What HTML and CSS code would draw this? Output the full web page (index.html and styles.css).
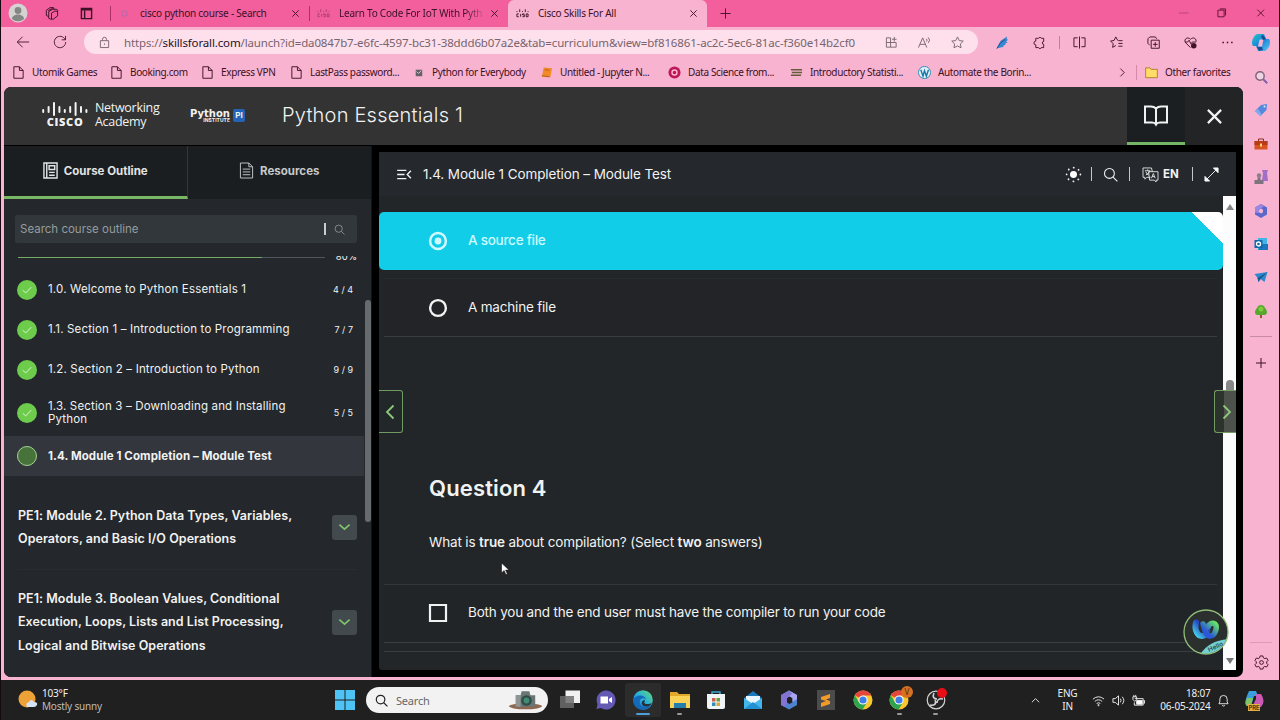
FILE: index.html
```
<!DOCTYPE html>
<html lang="en">
<head>
  <meta charset="utf-8">
  <title>Cisco Skills For All</title>
  <link rel="stylesheet" href="styles.css">
</head>
<body>
<svg class="defs">
  <defs>
    <symbol id="x" viewBox="0 0 10 10"><path d="M1.5 1.5l7 7M8.5 1.5l-7 7"/></symbol>
    <symbol id="page" viewBox="0 0 14 14"><path d="M2 .8h6l4 4v8.4H2zM8 .8v4h4"/></symbol>
    <symbol id="search" viewBox="0 0 14 14"><circle cx="6" cy="6" r="4.6"/><path d="M9.4 9.4l4 4"/></symbol>
    <symbol id="cisco" viewBox="0 0 46 14"><path d="M1.2 8v2M6.6 5v5M12 1v12M17.4 5v5M22.8 8v2M28.2 5v5M33.6 1v12M39 5v5M44.4 8v2"/></symbol>
    <symbol id="check" viewBox="0 0 20 20"><circle cx="10" cy="10" r="10" fill="#6dcc4b" stroke="none"/><path d="M5.8 10.2l2.9 2.8 5.5-5.8" stroke="#d8f5cb"/></symbol>
    <symbol id="down" viewBox="0 0 14 8"><path d="M1.5 1.5L7 6.3l5.500-4.800"/></symbol>
    <symbol id="chrome" viewBox="0 0 20 20"><g stroke="none"><circle cx="10" cy="10" r="9.500" fill="#fbc72e"/><path d="M10 10L1.800 5.200A9.500 9.500 0 0 1 18.300 5.400H10z" fill="#e2473c"/><path d="M1.800 5.200A9.500 9.500 0 0 0 9.600 19.500L14 12.200 6 12.200z" fill="#2da44f"/><circle cx="10" cy="10" r="4.600" fill="#fff"/><circle cx="10" cy="10" r="3.600" fill="#3d7fe6"/></g></symbol>
    <linearGradient id="cop" x1="0" y1="0" x2="1" y2="1"><stop offset="0" stop-color="#2bc6c9"/><stop offset=".5" stop-color="#1685d8"/><stop offset="1" stop-color="#63c8f4"/></linearGradient>
    <linearGradient id="edge" x1="0" y1="1" x2="1" y2="0"><stop offset="0" stop-color="#1769c5"/><stop offset=".5" stop-color="#28aede"/><stop offset="1" stop-color="#62dc6d"/></linearGradient>
    <linearGradient id="webex1" x1="0" y1="1" x2="1" y2="0"><stop offset="0" stop-color="#48d6ea"/><stop offset=".6" stop-color="#2548c4"/></linearGradient>
    <linearGradient id="webex2" x1="0" y1="1" x2="1" y2="0"><stop offset=".3" stop-color="#2a58d6"/><stop offset="1" stop-color="#66e266"/></linearGradient>
  </defs>
</svg>

<div class="browser">
  <div class="window">
    <div class="tabs">
      <svg class="avatar" viewBox="0 0 20 20"><circle cx="10" cy="10" r="9.500" fill="#d5d3d2"/><circle cx="10" cy="7.500" r="3.400" fill="#858785"/><path d="M4 16c0-6 12-6 12 0a9 9 0 0 1-12 0z" fill="#858785"/></svg>
      <svg class="workspaces" viewBox="0 0 16 16"><path d="M7 14l-2-1V6l4-2.500h4.500l1 1v6L10 14zM8 14V7.500l3.500-2h3M5 11.500L2.500 10V4.500l4-2.800h4M4.500 5L8 3h3"/></svg>
      <svg class="tabmenu" viewBox="0 0 14 14"><path d="M1.500 1.500h11v11h-11zM1.500 3h11M5 4v8" stroke-width="1.500"/></svg>
      <div class="tab first"><svg class="fav" viewBox="0 0 12 12"><circle cx="6" cy="6" r="2.500" stroke="#b66bb0"/></svg><span>cisco python course - Search</span><svg class="close"><use href="#x"/></svg></div>
      <div class="tab second"><svg class="fav faded cisco-fav" viewBox="0 0 14 10"><path d="M1 3v1M4 1v3M7 3v1M10 1v3M13 3v1M3 6H1v3h2M5 6v3M9 6H7v1h2v2H7M11 6h2v3h-2z"/></svg><span>Learn To Code For IoT With Pyth</span><svg class="close"><use href="#x"/></svg></div>
      <div class="tab active"><svg class="fav cisco-fav" viewBox="0 0 14 10"><path d="M1 3v1M4 1v3M7 3v1M10 1v3M13 3v1M3 6H1v3h2M5 6v3M9 6H7v1h2v2H7M11 6h2v3h-2z"/></svg><span>Cisco Skills For All</span><svg class="close"><use href="#x"/></svg></div>
      <svg class="newtab" viewBox="0 0 12 12"><path d="M6 .5v11M.5 6h11"/></svg>
      <div class="winbtns">
        <svg viewBox="0 0 10 10"><path d="M0 5h10" stroke="#b74676"/></svg>
        <svg viewBox="0 0 10 10"><path d="M1 2h6.500v7H1zM3 .700h6v7"/></svg>
        <svg viewBox="0 0 10 10"><use href="#x"/></svg>
      </div>
    </div>

    <div class="toolbar">
      <svg class="back" viewBox="0 0 16 16"><path d="M15 8H1.500M7.500 2L1.500 8l6 6"/></svg>
      <svg class="reload" viewBox="0 0 16 16"><path d="M14 5.500A6.500 6.500 0 1 0 14.500 8M14.300 1v4.500H10"/></svg>
      <div class="address">
        <svg class="lock" viewBox="0 0 12 14"><path d="M1.500 5h9v7.500h-9zM3.800 5V3.500a2.200 2.200 0 0 1 4.400 0V5M6 8v1.500"/></svg>
        <span class="url">https://<b>skillsforall.com</b>/launch?id=da0847b7-e6fc-4597-bc31-38ddd6b07a2e&amp;tab=curriculum&amp;view=bf816861-ac2c-5ec6-81ac-f360e14b2cf0</span>
        <div class="addr-icons">
          <svg viewBox="0 0 14 14"><path d="M1.500 2H6v10H1.500zM1.500 7H12v5H6M10 1v5M7.500 3.500h5"/></svg>
          <svg viewBox="0 0 14 14"><path d="M.5 12.500L5 2l4.500 10.500M2 9h6M9 3q1.500 1.500 0 3M11 1.500q3 3 0 6"/></svg>
          <svg viewBox="0 0 14 14"><path d="M7 1l1.900 3.900 4.300.6-3.100 3 .7 4.200L7 10.700l-3.800 2 .7-4.200-3.100-3 4.300-.6z"/></svg>
        </div>
      </div>
      <div class="tools">
        <svg viewBox="0 0 14 14"><path d="M.5 13.500L5 5l7-4.500-.5 3 1.500.3-2 2.500 1.500.5-3 1.700 1 1-3 1 1 1z" fill="#3a86d0" stroke="none"/><path d="M1 13.500q3-7 9-10" stroke="#244e88"/></svg>
        <svg viewBox="0 0 14 14"><path d="M4 2.500h2a1.600 1.600 0 0 1 3 0h2.500V6a1.500 1.500 0 1 0 0 3v3.500H9a1.600 1.600 0 0 1-3 0H3V9.500a2 2 0 0 1 0-4V2.500z"/></svg>
        <i></i>
        <svg viewBox="0 0 14 14"><path d="M5 2H1v9.500h4M9 2h4v9.500H9M7 .5v13"/></svg>
        <svg viewBox="0 0 14 14"><path d="M8.500 5L6.200 1 4.400 4.800.6 5.500l2.900 2.700-.7 4 3.500-1.900M9 5h4.500M9 8h4.500M9 11h4.500"/></svg>
        <svg viewBox="0 0 14 14"><path d="M4.500 4.500h8.700v8.700H4.500zM8.900 6.500v5M6.400 9h5M3 10L1 8V3l2-2h6l1.500 2"/></svg>
        <svg viewBox="0 0 14 14"><path d="M7 12.500L1.500 7C-.5 3 4 .5 7 3.500 10 .5 14.500 3 12.500 7M1 6.500h3l1.500-2 2 4 1.500-2h3"/><circle cx="10.500" cy="10.500" r="3" fill="#421327" stroke="none"/></svg>
        <svg viewBox="0 0 14 14"><path d="M1.500 7h1.600M6.200 7h1.600M10.900 7h1.600" stroke-width="1.600"/></svg>
      </div>
    </div>

    <div class="bookmarks">
      <div><svg><use href="#page"/></svg>Utomik Games</div>
      <div><svg><use href="#page"/></svg>Booking.com</div>
      <div><svg><use href="#page"/></svg>Express VPN</div>
      <div><svg><use href="#page"/></svg>LastPass password...</div>
      <div><svg viewBox="0 0 14 14"><path d="M4 4h7v7H4z" fill="#665e69" stroke="none"/><path d="M5 6l2 2 3-3" stroke="#d9d2da"/></svg>Python for Everybody</div>
      <div><svg viewBox="0 0 14 14"><path d="M4 1.500l9 1-2 10-9-1z" fill="#f28a28" stroke="none"/><path d="M5 4l5 .5M2 10.500l8 1" stroke="#b65e20"/></svg>Untitled - Jupyter N...</div>
      <div><svg viewBox="0 0 14 14"><circle cx="7" cy="7" r="6.500" fill="#bd185c" stroke="none"/><circle cx="7" cy="7" r="2.700" stroke="#ffb9ce" stroke-width="1.500"/></svg>Data Science from...</div>
      <div><svg viewBox="0 0 14 14"><path d="M1 4h12M2 7h11M1 10h11" stroke="#665c39" stroke-width="1.600"/></svg>Introductory Statisti...</div>
      <div><svg viewBox="0 0 14 14"><circle cx="7" cy="7" r="6.500" fill="#e4f1f9" stroke="#218db1"/><path d="M3 4l2.400 7L7 5l2 6 2.300-7" stroke="#1679a5" stroke-width="1.500"/></svg>Automate the Borin...</div>
      <svg class="more" viewBox="0 0 8 12"><path d="M1.500 1.500L6 6l-4.500 4.500"/></svg>
      <div class="other"><svg viewBox="0 0 14 14"><path d="M.7 2h4.500l1.500 1.600h6.600v9H.7z" fill="#ffdc68" stroke="#af7c28"/></svg>Other favorites</div>
    </div>

    <div class="app">
      <header>
        <div class="cisco">
          <svg class="bars"><use href="#cisco"/></svg>
          <strong>CISCO</strong>
        </div>
        <div class="netacad"><div>Networking</div><div>Academy</div></div>
        <div class="institute"><div><b>Python</b><small>INSTITUTE</small></div><em>PI</em></div>
        <h1>Python Essentials 1</h1>
        <div class="book"><svg viewBox="0 0 24 22"><path d="M12 3.500Q10 1.500 7 1.500H1v16h7q3 0 4 2 1-2 4-2h7v-16h-6q-3 0-5 2v16"/></svg></div>
        <div class="exit"><svg viewBox="0 0 18 18"><path d="M2 2l14 14M16 2L2 16"/></svg></div>
      </header>

      <div class="main">
        <aside>
          <nav>
            <div class="on"><svg viewBox="0 0 16 18"><path d="M1 1h14v16H1zM4 1v16M6.500 4h6v4h-6zM6.500 11h6M6.500 14h6" stroke-width="1.500"/></svg>Course Outline</div>
            <div><svg viewBox="0 0 16 18"><path d="M1.500 1h9l4 4v12h-13zM10.500 1v4h4M4 7.500h8M4 10.500h8M4 13.500h8"/></svg>Resources</div>
          </nav>
          <div class="find"><span>Search course outline</span><i></i><svg><use href="#search"/></svg></div>
          <div class="progress"><div class="track"><div></div></div><span>80%</span></div>
          <ul>
            <li><svg><use href="#check"/></svg><p>1.0. Welcome to Python Essentials 1</p><span>4 / 4</span></li>
            <li><svg><use href="#check"/></svg><p>1.1. Section 1 – Introduction to Programming</p><span>7 / 7</span></li>
            <li><svg><use href="#check"/></svg><p>1.2. Section 2 – Introduction to Python</p><span>9 / 9</span></li>
            <li class="tall"><svg><use href="#check"/></svg><p>1.3. Section 3 – Downloading and Installing Python</p><span>5 / 5</span></li>
            <li class="current"><svg viewBox="0 0 20 20"><circle cx="10" cy="10" r="9.500" fill="#477239" stroke="#a5d293"/></svg><p>1.4. Module 1 Completion – Module Test</p></li>
          </ul>
          <div class="module m2"><h3>PE1: Module 2. Python Data Types, Variables,<br>Operators, and Basic I/O Operations</h3><button><svg><use href="#down"/></svg></button></div>
          <div class="module m3"><h3>PE1: Module 3. Boolean Values, Conditional<br>Execution, Loops, Lists and List Processing,<br>Logical and Bitwise Operations</h3><button><svg><use href="#down"/></svg></button></div>
          <div class="thumb"></div>
        </aside>

        <section class="content">
          <div class="crumb">
            <svg class="burger" viewBox="0 0 16 12"><path d="M0 1.500h10M0 6h8M0 10.500h10M15 2l-4 4 4 4" stroke-width="1.500"/></svg>
            <h2>1.4. Module 1 Completion – Module Test</h2>
            <svg class="sun" viewBox="0 0 18 18"><circle cx="9" cy="9" r="3.700" fill="#fff" stroke="none"/><circle cx="9" cy="9" r="7.300" stroke-width="1.900" stroke-dasharray=".1 5.630" stroke-linecap="round"/></svg>
            <i></i>
            <svg class="glass"><use href="#search"/></svg>
            <i></i>
            <div class="lang"><svg viewBox="0 0 18 16"><path d="M9 11H5l-2 2v-2H1V1h9l1 4M7 5h10v9h-2v2l-2-2H8zM3 4h6M6 2.500V4M4 8.500q3-1 4-4M4 5q1 3 3 3.500M10 12l2-5 2 5M10.800 10.200h2.500"/></svg>EN</div>
            <i></i>
            <svg class="expand" viewBox="0 0 16 16"><path d="M3 13L13 3" /><path d="M15 1v5l-5-5zM1 15v-5l5 5z" fill="#fff"/></svg>
          </div>
          <div class="scroller">
            <div class="quiz">
              <div class="option picked"><svg viewBox="0 0 20 20"><circle cx="10" cy="10" r="7.900" stroke-width="2.500"/><circle cx="10" cy="10" r="3.400" fill="#cffaff" stroke="none"/></svg><span>A source file</span></div>
              <div class="option plain"><svg viewBox="0 0 20 20"><circle cx="10" cy="10" r="7.900" stroke-width="2.400"/></svg><span>A machine file</span></div>
              <div class="question">
                <h2>Question 4</h2>
                <p>What is <b>true</b> about compilation? (Select <b>two</b> answers)</p>
              </div>
              <div class="option box"><svg viewBox="0 0 20 20"><path d="M2 2h16v16H2z" stroke-width="2.200"/></svg><span>Both you and the end user must have the compiler to run your code</span></div>
              <div class="nextline"></div>
            </div>
            <div class="scrollbar"><b class="up"></b><b class="grip"></b><b class="dn"></b></div>
          </div>
          <div class="prev"><svg viewBox="0 0 10 16"><path d="M8.500 1.500L2 8l6.500 6.500"/></svg></div>
          <div class="next"><svg viewBox="0 0 10 16"><path d="M1.500 1.500L8 8l-6.500 6.500"/></svg></div>
          <svg class="webex" viewBox="0 0 46 46">
            <defs><clipPath id="round"><circle cx="23" cy="23" r="21.500"/></clipPath></defs>
            <circle cx="23" cy="23" r="22" fill="#2b2f2e" stroke="#91bd78" stroke-width="1.300"/>
            <g clip-path="url(#round)"><path d="M17 46q8-14 29-16v16z" fill="#75d0d2" stroke="none"/><text x="26" y="43" transform="rotate(-24 26 43)">Hello</text></g>
            <path d="M13 13.500c-2 8 2 14 6.500 13.500 4 0 5-5 5.500-10" stroke="url(#webex1)" stroke-width="6" stroke-linecap="round"/>
            <path d="M20 15c2 7 3 12 7 12 5 0 8-9 5-12-3-2-6 0-7 3" stroke="url(#webex2)" stroke-width="5.500" stroke-linecap="round"/>
          </svg>
          <svg class="cursor" viewBox="0 0 10 14"><path d="M1.500 1v10l2.600-2.400 1.700 4 1.600-.7-1.800-3.800h3.500z" fill="#fff" stroke="#111" stroke-width=".6"/></svg>
        </section>
      </div>
    </div>
  </div>

  <div class="sidebar">
    <svg class="copilot" viewBox="0 0 20 20"><path d="M6 1h7l2 5h3c3 4-1 11-4 12H7l-2-5H2C-1 9 3 2 6 1z" fill="url(#cop)" stroke="none"/><path d="M8.500 6.500h4l-1.500 7H7z" fill="#f8b3d0" stroke="none"/><path d="M6 14l2 4 4-1-1-3zM12 2l3 4-3 1-2-4z" fill="#174e91" stroke="none"/></svg>
    <svg viewBox="0 0 14 14"><circle cx="6" cy="6" r="4.200" stroke="#81617a" stroke-width="1.400" fill="#efd4e3"/><path d="M9.200 9.200l4 4" stroke-width="2" stroke="#8360ad"/></svg>
    <svg viewBox="0 0 14 14"><path d="M1 8l6-6 6-1-.5 6-6 6z" fill="#5688dc" stroke="none"/><path d="M1 8l5 5 2-1-4-6z" fill="#82a9ed" stroke="none"/><circle cx="10.500" cy="3.500" r="1" fill="#dce8ff" stroke="none"/></svg>
    <svg viewBox="0 0 14 14"><path d="M4.500 4V2h5v2" stroke="#8b3216"/><path d="M.5 4h13v8.500H.5z" fill="#d65423" stroke="none"/><path d="M.5 4h13v4H.5z" fill="#b53b1b" stroke="none"/><path d="M6 6.500h2v3H6z" fill="#ffd475" stroke="none"/></svg>
    <svg viewBox="0 0 14 14"><path d="M8 0h6l-1 3 1 8H8l1-8z" fill="#a16fc6" stroke="none"/><circle cx="5" cy="5.500" r="2.200" fill="#8a7f8b" stroke="none"/><path d="M3.500 7.500h3V10h3v4H.5v-4h3z" fill="#7e747f" stroke="none"/></svg>
    <svg viewBox="0 0 14 14"><path d="M7 0l6 3.500v7L7 14l-6-3.500v-7zM7 4.500L5 5.700v2.600l2 1.200 2-1.200V5.700z" fill="#5a68cc" fill-rule="evenodd" stroke="none"/><path d="M7 0L1 3.500v5l4 .5V5.700l2-1.200 3-2.500z" fill="#9b86e0" stroke="none"/></svg>
    <svg viewBox="0 0 14 14"><path d="M4 1h9v12H4z" fill="#42b4e6" stroke="none"/><path d="M8 7h6v6H4z" fill="#1877bd" stroke="none"/><path d="M.5 3h8v8h-8z" fill="#1269a9" stroke="none"/><circle cx="4.500" cy="7" r="2" stroke="#fff" stroke-width="1.300"/></svg>
    <svg viewBox="0 0 14 14"><path d="M.5 4L13.500 2l-3 10-4-3-2 3-1-4z" fill="#2d89cb" stroke="none"/><path d="M3.500 8l10-6-7 7-2 3z" fill="#145c96" stroke="none"/></svg>
    <svg viewBox="0 0 14 14"><path d="M6 9h2v5H6z" fill="#8f572c" stroke="none"/><path d="M3 11C-1 9 2 5 3 4c1-4 7-4 8 0 1 1 4 5 0 7z" fill="#55a82d" stroke="none"/><circle cx="7" cy="5" r="2.500" fill="#82c83f" stroke="none"/></svg>
    <i></i>
    <svg class="plus" viewBox="0 0 14 14"><path d="M7 2v10M2 7h10"/></svg>
    <i class="low"></i>
    <svg class="gear" viewBox="0 0 16 16"><path d="M6.500 1h3l.5 2 1.500.8 2-.6L15 5.800 13.500 7.300v1.500L15 10.300l-1.500 2.500-2-.6-1.500.8-.5 2h-3L6 13l-1.500-.8-2 .6L1 10.300l1.500-1.500V7.300L1 5.800l1.500-2.600 2 .6L6 3z"/><circle cx="8" cy="8" r="2"/></svg>
  </div>
</div>

<footer>
  <svg class="sunny" viewBox="0 0 20 20"><circle cx="9" cy="9" r="8.500" fill="#eea137"/><path d="M9 17q-2-4 2-5 2-4 5 0 4 0 3 3-1 2-3 2z" fill="#d4e4f5"/></svg>
  <div class="weather">103°F<br><span>Mostly sunny</span></div>
  <svg class="win" viewBox="0 0 20 20"><path d="M0 0h9.500v9.500H0zM10.500 0H20v9.500h-9.500zM0 10.500h9.500V20H0zM10.500 10.500H20V20h-9.500z" fill="#4ec4f4"/></svg>
  <div class="tsearch"><svg><use href="#search"/></svg><span>Search</span>
    <svg class="camera" viewBox="0 0 36 20"><ellipse cx="18" cy="16.500" rx="17" ry="3" fill="#8f664f"/><path d="M8 5h5l1-4h8l1 4h5v12H8z" fill="#687674"/><path d="M8 5h5v12H8z" fill="#8c9695"/><circle cx="19" cy="10.500" r="5.500" fill="#344b48"/><circle cx="19" cy="10.500" r="3" fill="#3f8d72"/></svg>
  </div>
  <div class="apps">
    <div><svg viewBox="0 0 20 20"><path d="M5.500 .5H20v12.500H5.500z" fill="#f0f0f0"/><path d="M0 6h14v12H0z" fill="#6c6c6c" opacity=".85"/></svg></div>
    <div><svg viewBox="0 0 20 20"><path d="M10 .5a9.500 9.500 0 1 1-5 17.500L.5 19l1-5A9.500 9.500 0 0 1 10 .5z" fill="#6459b3"/><path d="M4.500 6.500h7.500v7H4.500zM13 9l3-2v6l-3-2z" fill="#fff"/></svg></div>
    <div class="focus"><svg viewBox="0 0 20 20"><circle cx="10" cy="10" r="9.800" fill="url(#edge)"/><path d="M.3 10C2 4 12 4 13 9.500 10 6.500 5.500 9 7 13.500c1.500 4 7.500 4 11.300 1.500C15 21 7 21 3 17 .8 15 .2 12 .3 10z" fill="#1669b8"/><path d="M11.500 10c1 1 0 1.800-.5 2.500 1 2.200 5.500 1.700 8 .5-1.500 3-4.500 4-7 3.500-4-1-4.500-5.500-.5-6.500z" fill="#24303a"/></svg><u></u></div>
    <div><svg viewBox="0 0 20 20"><path d="M0 2h7l2 2h11v14H0z" fill="#e2a829"/><path d="M0 6h20v12H0z" fill="#fbd258"/><path d="M4 13h12v5H4z" fill="#237ead"/></svg><u class="dot"></u></div>
    <div><svg viewBox="0 0 20 20"><path d="M6 5V2h8v3" fill="none" stroke="#3ca5d1" stroke-width="1.500"/><path d="M1 4h18v13q0 2-2 2H3q-2 0-2-2z" fill="#f1f4f6"/><path d="M6 8h3.500v3.500H6z" fill="#cb614b"/><path d="M10.500 8H14v3.500h-3.500z" fill="#6d9d45"/><path d="M6 12.500h3.500V16H6z" fill="#338cbb"/><path d="M10.500 12.500H14V16h-3.500z" fill="#d4a93c"/></svg></div>
    <div><svg viewBox="0 0 20 20"><path d="M1 8l9-7 9 7v11H1z" fill="#1878bd"/><path d="M3 6h14v8H3z" fill="#e9f6ff"/><path d="M1 8l9 6 9-6v11H1z" fill="#42b5ea"/><path d="M1 19l9-7 9 7z" fill="#2391d1"/></svg></div>
    <div><svg viewBox="0 0 20 20"><path d="M10 .5l8 4.500v10l-8 4.500L2 15V5zM10.500 6.500L8 8v4.500l2.500 1.500 3-1.800V8z" fill="#4f83cf" fill-rule="evenodd"/><path d="M10 .5L2 5v10l4 2 2-4.500V8l5-3.500z" fill="#8473d2"/><path d="M10 .5l8 4.500v4l-4.500 3V8L10 6l3-2z" fill="#a9a4f0"/></svg></div>
    <div><svg viewBox="0 0 20 20"><path d="M1 0h18v20H1z" fill="#4b4b4b"/><path d="M5 7l9-3v4l-4 1.500 4 1.500v3L5 17v-4l5-2-5-1.500z" fill="#f29b26"/></svg></div>
    <div><svg><use href="#chrome"/></svg></div>
    <div><svg><use href="#chrome"/></svg><em>V</em><u class="dot"></u></div>
    <div><svg viewBox="0 0 20 20"><circle cx="10" cy="10" r="8.800" fill="#242424" stroke="#d5d5d5" stroke-width="1.200"/><path d="M8 3c-2 4 0 6 3 6M17 9c-4-1-6 1-6 4M4 15c4 1 7-1 5-5" stroke="#d5d5d5" stroke-width="1.500" fill="none"/></svg><em class="rec"></em><u class="dot"></u></div>
  </div>
  <svg class="tray" viewBox="0 0 10 6"><path d="M1 5.500l4-4 4 4"/></svg>
  <div class="eng">ENG<br>IN</div>
  <div class="status">
    <svg viewBox="0 0 14 14"><path d="M1 5.500q6-5 12 0M3 8q4-3.500 8 0M5 10.200q2-1.600 4 0"/><circle cx="7" cy="12" r=".7"/></svg>
    <svg viewBox="0 0 14 14"><path d="M1 5h2.500L7 2v10L3.500 9H1zM9 5q1.500 2 0 4M11 3q3.500 4 0 8"/></svg>
    <svg viewBox="0 0 14 14"><path d="M3 5h9v7H2.500V9M12.500 7h1v3h-1"/><path d="M5 7h6v4H5z" fill="#fff"/><path d="M1 3h4v3L3 8 1 6zM2 1v2M4 1v2"/></svg>
  </div>
  <div class="clock">18:07<br>06-05-2024</div>
  <svg class="bell" viewBox="0 0 12 14"><path d="M1 10.500h10L10 8.500V5.500a4 4 0 0 0-8 0v3zM4.500 12.500q1.500 1 3 0"/></svg>
  <div class="pre"><svg viewBox="0 0 20 20"><path d="M5 1h7l2 5h-4L7 16H3Q-1 14 5 1z" fill="#3b9ddd"/><path d="M12 4h5q5 7 0 13H8l4-8z" fill="#c95bb5"/><path d="M3 8h6l-2 8H3q-3-2 0-8z" fill="#82c464"/></svg><b>PRE</b></div>
</footer>
</body>
</html>
```
FILE: styles.css
```
* { box-sizing: border-box; }
body {
  margin: 0;
  width: 1280px;
  height: 720px;
  overflow: hidden;
  background: #16090f;
  font-family: "Noto Sans", "Open Sans", sans-serif;
  color: #3c1025;
}
svg { display: block; flex: none; fill: none; stroke: currentColor; stroke-width: 1; overflow: visible; }
h1, h2, h3, p, ul { margin: 0; padding: 0; font-weight: 400; }
.defs { position: absolute; width: 0; height: 0; }

.browser {
  display: flex;
  width: 1278px;
  height: 680px;
  margin-left: 1px;
  background: linear-gradient(#f25f9c 27px, #f8b3d0 27px);
}
.window { width: 1242px; flex: none; }

/* tab strip */
.tabs { display: flex; align-items: center; height: 27px; font-size: 10px; letter-spacing: -.23px; width: 1277px; white-space: nowrap; }
.tabs > svg, .winbtns { margin-bottom: 1px; }
.tabs .avatar { width: 20px; height: 20px; margin-left: 7px; stroke: none; }
.workspaces { width: 15px; height: 15px; margin-left: 16px; }
.tabmenu { width: 13px; height: 13px; margin-left: 21px; }
.tab { display: flex; align-items: center; height: 27px; padding-bottom: 1px; }
.first { width: 199px; margin-left: 17px; padding-left: 8px; }
.second { width: 199px; padding-left: 8px; }
.first, .second { background: linear-gradient(#a93267, #a93267) left center / 1px 15px no-repeat; }
.active { width: 199px; padding-left: 8px; background: #f8b3d0; border-radius: 6px 6px 0 0; }
.fav { width: 13px; height: 13px; margin-right: 9px; }
.cisco-fav { height: 10px; }
.faded { opacity: .4; }
.second span {
  background: linear-gradient(90deg, #3c1025 88%, #c55285);
  background-clip: text;
  -webkit-background-clip: text;
  color: transparent;
}
.close { width: 9px; height: 9px; margin-left: auto; margin-right: 9px; }
.newtab { width: 11px; height: 11px; margin-left: 13px; }
.winbtns { display: flex; gap: 29px; margin-left: auto; margin-right: 13px; color: #611432; }
.winbtns svg { width: 9.500px; height: 10px; }

/* toolbar */
.toolbar { display: flex; align-items: center; height: 30px; }
.back { width: 14px; height: 14px; margin-left: 15px; }
.reload { width: 14px; height: 14px; margin: 0 17px 0 23px; }
.address { display: flex; align-items: center; width: 894px; height: 24px; border-radius: 12px; background: #fde0ec; color: #77646d; }
.lock { width: 11px; height: 13px; margin: 0 14px 0 15px; }
.url { font-size: 11.500px; letter-spacing: -.138px; width: 752px; white-space: nowrap; }
.url b { font-weight: 400; color: #251119; }
.addr-icons { display: flex; gap: 20px; margin-left: 9px; }
.addr-icons svg { width: 13px; height: 13px; }
.tools { display: flex; align-items: center; margin-left: 18px; width: 238px; justify-content: space-between; }
.tools svg { width: 13px; height: 13px; }
.tools i { width: 1px; height: 13px; background: #bf829d; margin: 0 -11px; }

/* favourites */
.bookmarks {
  display: grid;
  grid-template-columns: 98px 91px 89px 122px 128px 128px 122px 128px 201px 17px 1fr;
  align-items: center;
  height: 30px;
  padding-left: 11px;
  font-size: 10px;
  letter-spacing: -.36px;
  white-space: nowrap;
}
.bookmarks div { display: flex; align-items: center; gap: 7px; }
.bookmarks svg { width: 13px; height: 13px; }
.bookmarks .more { width: 7px; height: 11px; }
.bookmarks .other { border-left: 1px solid #d68aaa; padding-left: 8px; height: 15px; }

/* edge sidebar */
.sidebar { display: flex; flex-direction: column; align-items: center; padding-top: 33px; width: 36px; flex: none; }
.sidebar svg { width: 14px; height: 14px; margin-bottom: 19.400px; }
.sidebar .copilot { width: 20px; height: 20px; margin-bottom: 17px; }
.sidebar i { width: 22px; height: 1px; background: #c88ba4; margin: -1px 0 19px; }
.sidebar .plus { margin-bottom: 0; }
.sidebar .low { margin: auto 0 12px; background: #d99db5; }
.sidebar .gear { width: 15px; height: 15px; margin-bottom: 10px; }

/* course player */
.app { width: 1239px; height: 590px; margin-left: 3px; border-radius: 7px; overflow: hidden; background: #000; font-family: Inter, sans-serif; color: #f1f2f2; }
.app header { display: flex; height: 58px; background: #333; }
.cisco { width: 46px; margin: 15px 0 0 38px; }
.bars { width: 46px; height: 14px; stroke-width: 2; stroke-linecap: round; }
.cisco strong { display: block; font: 800 11px/12px "Open Sans", sans-serif; text-align: center; letter-spacing: .7px; }
.netacad { width: 95px; margin: 14px 0 0 7px; font: 12.500px/14px "Open Sans", sans-serif; letter-spacing: -.3px; }
.netacad div { height: 14px; }
.institute { display: flex; width: 92px; padding-top: 22px; }
.institute b { display: block; font: 700 10px/9px "DejaVu Sans", sans-serif; }
.institute small { display: block; font: 700 5px/4px Inter, sans-serif; text-align: right; }
.institute em { width: 12px; height: 13px; margin-left: 3px; border-radius: 2px; background: #2364b6; font: 700 8px/13px Inter, sans-serif; text-align: center; }
.app h1 { font-size: 20px; line-height: 56px; font-weight: 300; letter-spacing: .22px; }
.book, .exit { display: flex; align-items: center; justify-content: center; width: 58px; background: #1b1f22; }
.book { margin-left: auto; border-bottom: 3px solid #74b665; padding-top: 2px; }
.book svg { width: 24px; height: 22px; stroke-width: 2; }
.exit { background: #222425; }
.exit svg { width: 17px; height: 17px; stroke-width: 2.300; }

.main { display: flex; height: 532px; padding-top: 1px; }
aside { position: relative; width: 368px; height: 531px; background: #24272b; flex: none; border-right: 1px solid #111315; overflow: hidden; }
nav { display: flex; height: 53px; background: #1a1e21; font-size: 11.500px; font-weight: 700; color: #c7c9cb; }
nav div { display: flex; align-items: center; justify-content: center; gap: 6px; width: 184px; padding-bottom: 4px; }
nav svg { width: 15px; height: 17px; }
nav .on { border-bottom: 3px solid #79b765; border-right: 1px solid #31383a; padding-bottom: 1px; color: #e2e3e4; }
.find { display: flex; align-items: center; width: 342px; height: 28px; margin: 16px 0 0 11px; padding: 0 12px 0 5px; background: #31373a; border-radius: 2px; font-size: 11.500px; color: #969c9f; }
.find i { width: 2px; height: 12px; background: #c9cccd; margin: 0 8px 0 auto; }
.find svg { width: 11px; height: 11px; }
/* the row is scrolled half out of view, only its foot shows */
.progress { display: flex; height: 6px; margin: 13px 14px 0 14px; justify-content: space-between; overflow: hidden; }
.track { width: 307px; height: 1px; margin-top: 1px; background: #4f5558; }
.track div { width: 79.500%; height: 1px; background: #75aa65; }
.progress span { font-size: 9.500px; line-height: 7px; height: 7px; margin-top: -3px; }
ul { list-style: none; padding-top: 7px; }
li { display: flex; align-items: center; height: 40px; width: 360px; padding: 1px 11px 0 13px; font-size: 11.500px; line-height: 13px; letter-spacing: .16px; }
li svg { width: 20px; height: 20px; margin-right: 11px; }
li p { width: 260px; white-space: normal; }
li span { margin-left: auto; font-size: 9px; letter-spacing: 0; white-space: nowrap; }
.tall { height: 47px; padding-top: 0; }
.current { background: #33373d; padding-top: 0; letter-spacing: .1px; }
.current p { font-weight: 700; }
.module { display: flex; align-items: center; justify-content: space-between; margin: 0 14px; font-size: 12.500px; line-height: 23.400px; letter-spacing: .04px; }
.module h3 { font-weight: 600; font-size: inherit; white-space: nowrap; }
.m2 { height: 94px; padding-top: 9px; border-bottom: 1px solid #292d30; }
.m3 { height: 104px; }
.module button { display: flex; align-items: center; justify-content: center; width: 25px; height: 25px; padding: 0; border: 0; border-radius: 3px; background: #424a4e; color: #7fc56c; }
.module svg { width: 13px; height: 8px; stroke-width: 1.800; }
.thumb { position: absolute; right: 0; top: 154px; width: 6px; height: 222px; border-radius: 3px; background: #686b6e; }

.content { position: relative; width: 857px; height: 518px; margin: 6px 0 0 7px; border-radius: 3px; background: #232628; }
.crumb { display: flex; align-items: center; height: 44px; padding-left: 18px; background: #25282d; }
.burger { width: 15px; height: 11px; }
.crumb h2 { font-size: 13.500px; letter-spacing: -.1px; width: 641px; margin-left: 11px; }
.crumb i { width: 1px; height: 14px; background: #c5c6c7; }
.sun { width: 17px; height: 17px; margin: 0 9px 0 1px; }
.glass { width: 15px; height: 15px; margin: 0 11px 0 11px; }
.lang { display: flex; align-items: center; gap: 4px; width: 62px; padding-left: 12px; font-size: 11.500px; font-weight: 700; }
.lang svg { width: 17px; height: 15px; stroke-width: .9; }
.expand { width: 15px; height: 15px; margin-left: 11px; }
.scroller { display: flex; height: 474px; }
.quiz { width: 844px; padding-top: 16px; font-size: 13.500px; letter-spacing: -.19px; }
.option { display: flex; align-items: center; padding-left: 49px; height: 58px; }
.option svg { width: 20px; height: 20px; margin-right: 20px; }
.option span { padding-bottom: 2px; }
.picked { background: linear-gradient(45deg, transparent 50%, #fff 51%) right top / 32px 32px no-repeat, #12cde8; border-radius: 5px; color: #cffaff; font-weight: 500; letter-spacing: -.26px; }
.plain { height: 59px; margin: 8px 6px 0 5px; padding-left: 44px; background: #222427; border-top: 1px solid #2a2b2d; border-bottom: 1px solid #3b3e40; }
.question { height: 247px; padding: 136px 0 0 50px; }
.question h2 { font-size: 22px; font-weight: 600; line-height: 30px; letter-spacing: .15px; }
.question p { line-height: 20px; margin-top: 29px; letter-spacing: -.15px; }
.question b { font-weight: 600; }
.box { margin: 0 6px 0 5px; padding-left: 44px; height: 59px; padding-bottom: 2px; border-top: 1px solid #333638; border-bottom: 1px solid #3b3e40; background: #222527; }
.nextline { height: 1px; margin: 8px 6px 0 5px; background: #3b3e40; }
.scrollbar { display: flex; flex-direction: column; align-items: center; width: 13px; background: #fcfcfc; }
.up, .dn { border: 4.500px solid transparent; }
.up { border-top: 0; border-bottom: 6px solid #858585; margin-top: 8px; }
.grip { width: 8px; height: 20px; border-radius: 4px; background: #888; margin-top: 170px; }
.dn { border-bottom: 0; border-top: 6px solid #777; margin-top: auto; margin-bottom: 6px; }

/* page arrows and chat badge float over the quiz */
.prev, .next { position: absolute; top: 238px; height: 43px; border: 1.500px solid #719b63; display: flex; align-items: center; justify-content: center; color: #8fc87b; }
.prev { left: 0; width: 24px; border-left: 0; border-radius: 0 3px 3px 0; background: #22282a; padding-right: 2px; }
.next { right: 0; width: 22px; border-right: 0; border-radius: 3px 0 0 3px; background: linear-gradient(90deg, #2c332c 9px, #4c514c 9px); padding-left: 2px; }
.prev svg, .next svg { width: 10px; height: 16px; stroke-width: 1.800; }
.webex { position: absolute; right: 7px; bottom: 15px; width: 46px; height: 46px; }
.webex text { font: 600 6.500px Inter, sans-serif; fill: #264d4c; stroke: none; }
.cursor { position: absolute; left: 121px; top: 410px; width: 10px; height: 14px; }

/* taskbar */
footer { display: flex; align-items: center; width: 1279px; height: 40px; margin-left: 1px; background: #202020; color: #f0f0f0; font-size: 10px; line-height: 13px; letter-spacing: -.2px; }
footer > svg, .apps svg, .pre svg { stroke: none; }
.sunny { width: 20px; height: 20px; margin-left: 17px; }
.weather { width: 292px; margin-left: 4px; }
.weather span { color: #bdbdbd; }
.win { width: 20px; height: 20px; margin-left: 1px; }
.tsearch { display: flex; align-items: center; width: 182px; height: 26px; margin-left: 11px; padding: 0 5px 0 9px; border-radius: 13px; background: #f2f2f2; color: #222; font-size: 11px; }
.tsearch > svg { width: 13px; height: 13px; stroke-width: 1.300; }
.tsearch span { margin-left: 8px; color: #666; }
.tsearch .camera { width: 35px; height: 20px; margin-left: auto; stroke: none; }
.apps { display: grid; grid-template-columns: repeat(11, 36.600px); margin-left: 3.500px; }
.apps div { position: relative; display: flex; height: 34px; align-items: center; justify-content: center; }
.apps svg { width: 20px; height: 20px; }
.apps .focus { background: #2c2c2c; border-radius: 3px; }
.apps u { position: absolute; bottom: 2px; width: 14px; height: 2.500px; border-radius: 2px; background: #4d9fd7; }
.apps .dot { width: 5px; background: #999; }
.apps em { position: absolute; left: 20px; top: 3px; width: 12px; height: 12px; border-radius: 6px; background: #d47122; font: 8px/12px "Noto Sans", sans-serif; text-align: center; color: #5b2a0a; }
.apps .rec { top: 5px; width: 10px; height: 10px; background: #e80e15; }
footer .tray { width: 9px; height: 6px; margin-left: 76.500px; stroke: #eee; }
.eng { width: 30px; margin-left: 13px; text-align: center; }
.status { display: flex; gap: 7px; margin-left: 9px; }
.status svg { width: 13px; height: 13px; }
.clock { width: 60px; margin-left: 6px; text-align: right; }
footer .bell { width: 11px; height: 13px; margin-left: 7px; stroke: #eee; }
.pre { position: relative; margin-left: 15px; }
.pre svg { width: 20px; height: 20px; }
.pre b { position: absolute; left: 4px; bottom: -1px; padding: 0 1px; background: #e2b344; color: #4c390b; font: 700 6px/7px Inter, sans-serif; }
```
